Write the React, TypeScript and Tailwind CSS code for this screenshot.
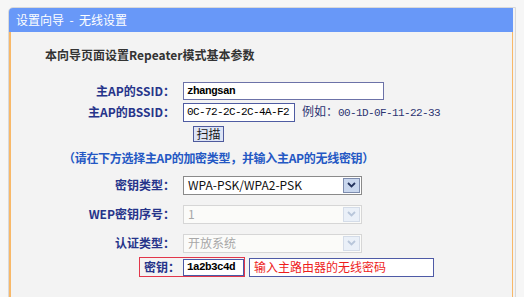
const cjk = { fontFamily: '"Noto Sans CJK SC", "Liberation Sans", sans-serif' };
const mono = { fontFamily: '"Liberation Mono", "Noto Sans CJK SC", monospace' };

function Chevron({ color }: { color: string }) {
  return (
    <svg width="9" height="6" viewBox="0 0 9 6">
      <path d="M1 1 L4.5 4.5 L8 1" fill="none" stroke={color} strokeWidth="1.8" />
    </svg>
  );
}

function Select({ value, disabled }: { value: string; disabled?: boolean }) {
  return (
    <div
      className={
        "w-[179px] h-[19px] flex items-center justify-between pl-[4px] pr-[1px] border " +
        (disabled ? "bg-[#fbfbf9] border-[#d6d6d6] text-[#a8a8a8]" : "bg-white border-[#8a8a8a] text-[#111]")
      }
    >
      <span className="text-[12px] leading-none" style={cjk}>
        {value}
      </span>
      <span
        className={
          "w-[17px] h-[15px] flex items-center justify-center border " +
          (disabled ? "bg-[#eaf0f8] border-[#d4dce8]" : "bg-[#c9d7ee] border-[#7d8cae]")
        }
      >
        <Chevron color={disabled ? "#b8c6da" : "#25345e"} />
      </span>
    </div>
  );
}

function Row({ label, children, className }: { label: string; children: React.ReactNode; className?: string }) {
  return (
    <div className={"flex items-center h-[20px] " + (className ?? "")}>
      <div className="w-[164px] text-right text-[12px] font-bold text-[#26348a] leading-none" style={cjk}>
        {label}
      </div>
      <div className="ml-[8px] flex items-center">{children}</div>
    </div>
  );
}

export default function App() {
  return (
    <div className="w-[524px] h-[297px] overflow-hidden bg-[#f6f6f6] pl-[8px] pr-[8px] pt-[7px]" style={cjk}>
      <div className="h-[310px] rounded-tl-[5px] border border-[#d9d9d9] bg-[#f3f3f3] pr-[2px] flex flex-col">
        <div className="h-[24px] shrink-0 bg-[#6898f8] rounded-tl-[4px] text-white text-[12px] pl-[7px] flex items-center">
          设置向导&nbsp;&nbsp;-&nbsp;&nbsp;无线设置
        </div>
        <div className="flex-1 border-l-2 border-r border-[#f8b868]">
          <div className="mt-[13px] h-[20px] flex items-center pl-[34px] text-[12px] font-bold text-[#333]">
            本向导页面设置Repeater模式基本参数
          </div>

          <Row label="主AP的SSID：" className="mt-[16px]">
            <div className="w-[201px] h-[18px] bg-white border border-[#6c72a8] flex items-center pl-[3px] text-[11px] tracking-[-0.6px] font-bold text-black" style={mono}>
              zhangsan
            </div>
          </Row>

          <Row label="主AP的BSSID：" className="mt-[1px]">
            <div className="w-[112px] h-[19px] bg-white border border-[#4f5ca2] flex items-center pl-[3px] text-[11px] tracking-[-0.6px] text-black" style={mono}>
              0C-72-2C-2C-4A-F2
            </div>
            <span className="ml-[7px] text-[12px] text-[#2c3472]">
              例如：<span className="text-[11px] tracking-[-0.6px]" style={mono}>00-1D-0F-11-22-33</span>
            </span>
          </Row>

          <div className="mt-[2px] h-[20px] flex items-center pl-[182px]">
            <button className="w-[31px] h-[16px] bg-[#dde4f5] border border-[#4e5a9c] text-[12px] leading-none text-[#1a1a1a] flex items-center justify-center">
              扫描
            </button>
          </div>

          <div className="mt-[4px] h-[20px] flex items-center pl-[52px] text-[12px] font-bold tracking-[-0.3px] text-[#2458c4]">
            （请在下方选择主AP的加密类型，并输入主AP的无线密钥）
          </div>

          <Row label="密钥类型：" className="mt-[7px]">
            <Select value="WPA-PSK/WPA2-PSK" />
          </Row>

          <Row label="WEP密钥序号：" className="mt-[9px]">
            <Select value="1" disabled />
          </Row>

          <Row label="认证类型：" className="mt-[9px]">
            <Select value="开放系统" disabled />
          </Row>

          <div className="mt-[4px] h-[20px] flex items-center pl-[128px]">
            <div className="w-[106px] h-[20px] border border-[#e2364a] flex items-center pl-[4px]">
              <span className="w-[36px] text-[12px] font-bold text-[#26348a] leading-none">密钥：</span>
              <div className="ml-[3px] w-[61px] h-[17px] bg-white border border-[#4a58a6] flex items-center pl-[3px] text-[11px] tracking-[-0.6px] font-bold text-black" style={mono}>
                1a2b3c4d
              </div>
            </div>
            <div className="ml-[4px] w-[185px] h-[19px] bg-white border border-[#4e5aa6] flex items-center pl-[4px] text-[12px] text-[#ee1c1c]">
              输入主路由器的无线密码
            </div>
          </div>
        </div>
      </div>
    </div>
  );
}
